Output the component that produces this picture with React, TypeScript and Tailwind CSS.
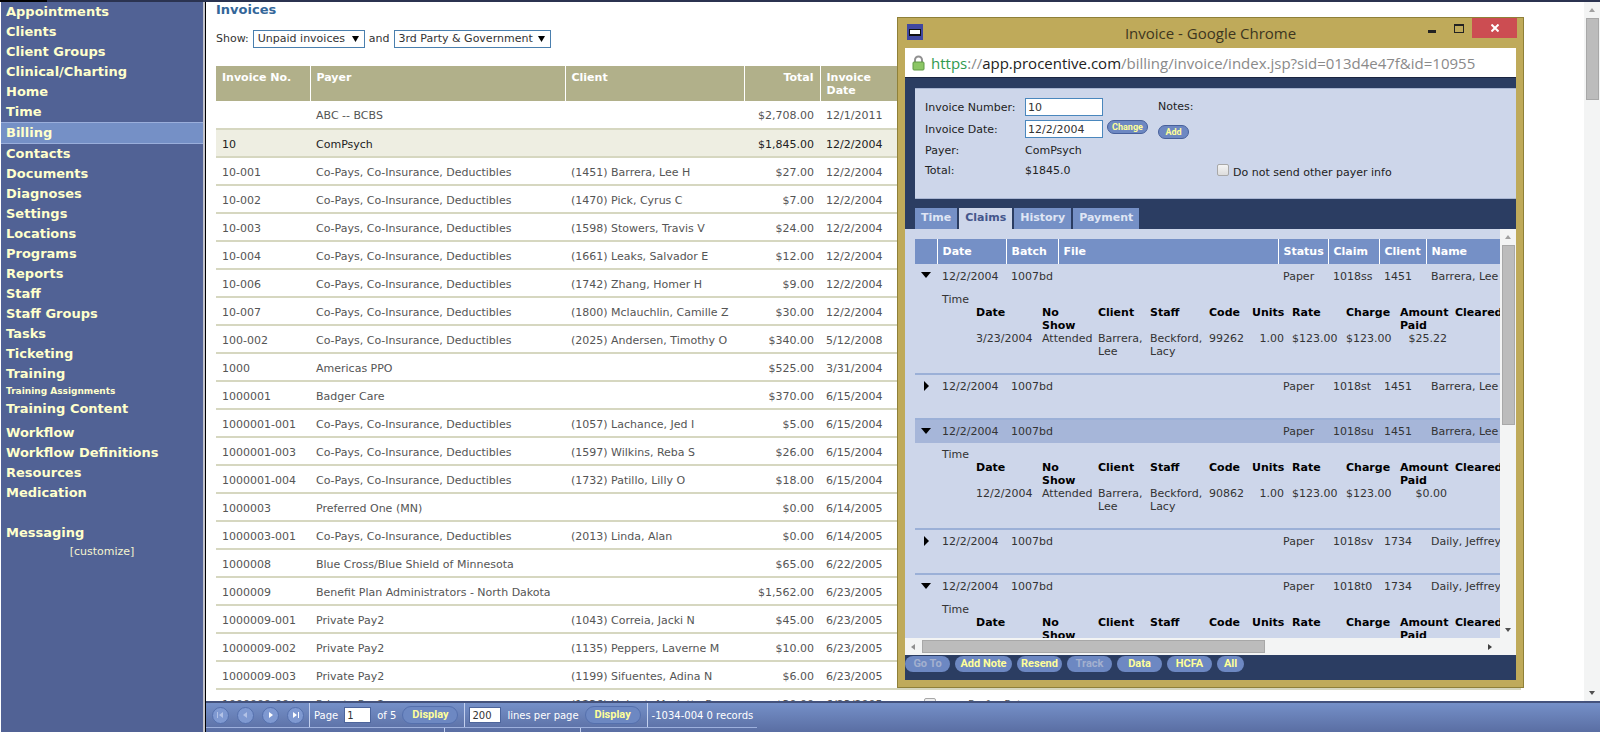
import { useState } from "react";
import type { ReactNode } from "react";

type Invoice = {
  no: string;
  payer: string;
  client?: string;
  total: string;
  date: string;
};

type Claim = {
  date: string;
  batch: string;
  status: string;
  claim: string;
  client: string;
  name: string;
  time?: { date: string; code: string; paid: string };
};

const COPAY = "Co-Pays, Co-Insurance, Deductibles";

const INVOICES: Invoice[] = [
  { no: "", payer: "ABC -- BCBS", total: "$2,708.00", date: "12/1/2011" },
  { no: "10", payer: "ComPsych", total: "$1,845.00", date: "12/2/2004" },
  { no: "10-001", payer: COPAY, client: "(1451) Barrera, Lee H", total: "$27.00", date: "12/2/2004" },
  { no: "10-002", payer: COPAY, client: "(1470) Pick, Cyrus C", total: "$7.00", date: "12/2/2004" },
  { no: "10-003", payer: COPAY, client: "(1598) Stowers, Travis V", total: "$24.00", date: "12/2/2004" },
  { no: "10-004", payer: COPAY, client: "(1661) Leaks, Salvador E", total: "$12.00", date: "12/2/2004" },
  { no: "10-006", payer: COPAY, client: "(1742) Zhang, Homer H", total: "$9.00", date: "12/2/2004" },
  { no: "10-007", payer: COPAY, client: "(1800) Mclauchlin, Camille Z", total: "$30.00", date: "12/2/2004" },
  { no: "100-002", payer: COPAY, client: "(2025) Andersen, Timothy O", total: "$340.00", date: "5/12/2008" },
  { no: "1000", payer: "Americas PPO", total: "$525.00", date: "3/31/2004" },
  { no: "1000001", payer: "Badger Care", total: "$370.00", date: "6/15/2004" },
  { no: "1000001-001", payer: COPAY, client: "(1057) Lachance, Jed I", total: "$5.00", date: "6/15/2004" },
  { no: "1000001-003", payer: COPAY, client: "(1597) Wilkins, Reba S", total: "$26.00", date: "6/15/2004" },
  { no: "1000001-004", payer: COPAY, client: "(1732) Patillo, Lilly O", total: "$18.00", date: "6/15/2004" },
  { no: "1000003", payer: "Preferred One (MN)", total: "$0.00", date: "6/14/2005" },
  { no: "1000003-001", payer: COPAY, client: "(2013) Linda, Alan", total: "$0.00", date: "6/14/2005" },
  { no: "1000008", payer: "Blue Cross/Blue Shield of Minnesota", total: "$65.00", date: "6/22/2005" },
  { no: "1000009", payer: "Benefit Plan Administrators - North Dakota", total: "$1,562.00", date: "6/23/2005" },
  { no: "1000009-001", payer: "Private Pay2", client: "(1043) Correia, Jacki N", total: "$45.00", date: "6/23/2005" },
  { no: "1000009-002", payer: "Private Pay2", client: "(1135) Peppers, Laverne M", total: "$10.00", date: "6/23/2005" },
  { no: "1000009-003", payer: "Private Pay2", client: "(1199) Sifuentes, Adina N", total: "$6.00", date: "6/23/2005" },
  { no: "1000009-004", payer: "Private Pay2", client: "(1236) Hubert, Marietta R", total: "$30.00", date: "6/23/2005" },
];

const CLAIMS: Claim[] = [
  { date: "12/2/2004", batch: "1007bd", status: "Paper", claim: "1018ss", client: "1451", name: "Barrera, Lee", time: { date: "3/23/2004", code: "99262", paid: "$25.22" } },
  { date: "12/2/2004", batch: "1007bd", status: "Paper", claim: "1018st", client: "1451", name: "Barrera, Lee" },
  { date: "12/2/2004", batch: "1007bd", status: "Paper", claim: "1018su", client: "1451", name: "Barrera, Lee", time: { date: "12/2/2004", code: "90862", paid: "$0.00" } },
  { date: "12/2/2004", batch: "1007bd", status: "Paper", claim: "1018sv", client: "1734", name: "Daily, Jeffrey" },
  { date: "12/2/2004", batch: "1007bd", status: "Paper", claim: "1018t0", client: "1734", name: "Daily, Jeffrey", time: { date: "12/2/2004", code: "90862", paid: "$0.00" } },
];

const MENU = [
  "Appointments", "Clients", "Client Groups", "Clinical/Charting", "Home", "Time", "Billing",
  "Contacts", "Documents", "Diagnoses", "Settings", "Locations", "Programs", "Reports",
  "Staff", "Staff Groups", "Tasks", "Ticketing", "Training", "Training Assignments",
  "Training Content", "Workflow", "Workflow Definitions", "Resources", "Medication", "Messaging",
];

function menuClass(item: string) {
  switch (item) {
    case "Billing":
      return "border-y border-[#9aaedb] bg-[#7590c6] text-[13px] leading-5";
    case "Training Assignments":
      return "text-[9px] leading-[15px]";
    case "Workflow":
      return "mt-1 text-[13px] leading-5";
    case "Messaging":
      return "mt-5 text-[13px] leading-5";
    default:
      return "text-[13px] leading-5";
  }
}

function Sidebar() {
  return (
    <nav className="ml-px w-[205px] shrink-0 border-r border-black bg-[#516295]">
      <div className="h-full border-r-2 border-[#c4c4cc]">
        {MENU.map((item) => (
          <a key={item} href="#" className={`block pl-[5px] font-bold text-[#ffffcc] ${menuClass(item)}`}>
            {item}
          </a>
        ))}
        <a href="#" className="block text-center text-[11px] leading-[18px] text-[#f5f5d0]">
          [customize]
        </a>
      </div>
    </nav>
  );
}

function Filter({ label, value, width }: { label: string; value: string; width: string }) {
  return (
    <span className={`relative inline-flex ${width}`}>
      <select
        aria-label={label}
        className="h-[18px] w-full appearance-none border border-[#4a7fae] bg-white pl-1 text-[11px] leading-4 text-[#333]"
      >
        <option>{value}</option>
      </select>
      <svg className="pointer-events-none absolute top-1.5 right-1.5" width="7" height="6" viewBox="0 0 7 6">
        <path d="M0 0h7L3.5 6z" fill="#000" />
      </svg>
    </span>
  );
}

function InvoiceTable() {
  const [selected, setSelected] = useState("10");
  const th = "border-r border-white px-1.5 pt-[5px] align-top font-bold";
  const td = "pt-0.5 pl-1.5 whitespace-nowrap";
  return (
    <table className="mt-[18px] w-[1305px] table-fixed border-collapse text-[11px] leading-[13px]">
      <colgroup>
        <col className="w-[94px]" />
        <col className="w-[255px]" />
        <col className="w-[179px]" />
        <col className="w-[76px]" />
        <col className="w-[98px]" />
        <col className="w-[44px]" />
        <col />
      </colgroup>
      <thead>
        <tr className="h-[35px] bg-[#b1b08a] text-left text-white">
          <th className={th}>Invoice No.</th>
          <th className={th}>Payer</th>
          <th className={th}>Client</th>
          <th className={`${th} text-right`}>Total</th>
          <th className={th}>
            Invoice
            <br />
            Date
          </th>
          <th className="w-[44px]"></th>
          <th></th>
        </tr>
      </thead>
      <tbody>
        {INVOICES.map((inv) => (
          <tr
            key={inv.no}
            onClick={() => setSelected(inv.no)}
            className={`h-7 border-b-2 border-[#d6d7c0] ${inv.no === selected ? "bg-[#eeeee2] text-[#222]" : "text-[#555]"}`}
          >
            <td className={td}>{inv.no}</td>
            <td className={td}>{inv.payer}</td>
            <td className={td}>{inv.client}</td>
            <td className="pt-0.5 pr-1.5 text-right">{inv.total}</td>
            <td className={td}>{inv.date}</td>
            <td className={td}>
              <input
                type="checkbox"
                aria-label={`Select ${inv.no}`}
                className="block size-3 appearance-none rounded-xs border border-[#a8a8a8] bg-[#eee]"
              />
            </td>
            <td className={td}>Prefer Paty</td>
          </tr>
        ))}
      </tbody>
    </table>
  );
}

function Arrow({ dir, color }: { dir: "up" | "down" | "left" | "right"; color: string }) {
  const d = {
    up: "M1 6L4 2l3 4z",
    down: "M1 2h6L4 6z",
    left: "M6 1v6L2 4z",
    right: "M2 1v6l4-3z",
  }[dir];
  return (
    <svg width="8" height="8" viewBox="0 0 8 8" className="shrink-0">
      <path d={d} fill={color} />
    </svg>
  );
}

function VerticalScrollbar({ thumb }: { thumb: string }) {
  return (
    <div className="flex w-4 shrink-0 flex-col items-center bg-[#f3f4f4] pt-1 pb-1">
      <Arrow dir="up" color="#a0a0a0" />
      <div className={`mt-1 w-[13px] border border-[#a8a8a8] bg-[#bcbcbc] ${thumb}`} />
      <div className="flex-1" />
      <Arrow dir="down" color="#505050" />
    </div>
  );
}

function Pill({ children, size, disabled }: { children: ReactNode; size: string; disabled?: boolean }) {
  return (
    <button
      type="button"
      disabled={disabled}
      className={`flex shrink-0 items-center justify-center rounded-full bg-[#6d88c2] font-[Roboto,sans-serif] font-bold text-[#ffff99] disabled:text-[#a3b0cf] ${size}`}
    >
      {children}
    </button>
  );
}

function PagerButton({ label, path, disabled }: { label: string; path: string; disabled?: boolean }) {
  return (
    <button
      type="button"
      aria-label={label}
      disabled={disabled}
      className="flex size-[17px] items-center justify-center rounded-full border border-[#5570ad] bg-[#7f99d1] text-white disabled:text-[#b3c2e6]"
    >
      <svg width="9" height="8" viewBox="0 0 9 8">
        <path d={path} fill="currentColor" />
      </svg>
    </button>
  );
}

function Pager() {
  const divider = "h-full w-px bg-[#c3d0ee]";
  const box = "h-4 border border-[#4d659c] bg-white px-0.5 text-[10px] text-[#333]";
  return (
    <footer className="h-[31px] border-t-2 border-[#44527c] bg-linear-to-b from-[#7590c8] to-[#5a6ea3] text-[10px] text-white">
      <div className="flex h-[25px] w-[551px] items-center border-b border-[#9db0dd]">
        <div className="flex w-[103px] justify-center gap-2">
          <PagerButton label="First page" path="M1 1h1v6H1zM7 1v6L3 4z" disabled />
          <PagerButton label="Previous page" path="M6 1v6L2 4z" disabled />
          <PagerButton label="Next page" path="M3 1v6l4-3z" />
          <PagerButton label="Last page" path="M2 1v6l4-3zM7 1h1v6H7z" />
        </div>
        <div className={divider} />
        <label className="flex items-center gap-1.5 pl-1">
          Page
          <input defaultValue="1" className={`w-[27px] ${box}`} />
        </label>
        <span className="px-1.5 whitespace-nowrap">of 5</span>
        <Pill size="h-[18px] w-14 border border-[#5570ad] text-[11px]">Display</Pill>
        <div className={`ml-1.5 ${divider}`} />
        <label className="flex items-center gap-1.5 pl-1 whitespace-nowrap">
          <input defaultValue="200" className={`w-8 ${box}`} />
          lines per page
        </label>
        <div className="w-1.5" />
        <Pill size="h-[18px] w-14 border border-[#5570ad] text-[11px]">Display</Pill>
        <div className={`ml-1.5 ${divider}`} />
        <span className="pl-1 whitespace-nowrap">-1034-004 0 records</span>
      </div>
      <div className="flex h-1">
        <div className="w-[239px] border-r border-[#c3d0ee]" />
        <div className="w-[136px] border-r border-[#c3d0ee]" />
      </div>
    </footer>
  );
}

function InvoiceForm() {
  const box = "h-[18px] w-[78px] border border-[#4a87bd] bg-white px-0.5 text-[11px] text-[#333]";
  return (
    <div className="ml-2.5 flex h-[111px] border-y border-[#a9b6d3] bg-[#cdd6ea] pt-[7px] pl-2.5 text-[11px] leading-[13px] text-[#222]">
      <div className="w-[233px]">
        <div className="flex h-[22px] items-center">
          <label htmlFor="invoice-number" className="w-[100px]">Invoice Number:</label>
          <input id="invoice-number" defaultValue="10" className={box} />
        </div>
        <div className="flex h-[22px] items-center">
          <label htmlFor="invoice-date" className="w-[100px]">Invoice Date:</label>
          <input id="invoice-date" defaultValue="12/2/2004" className={box} />
          <div className="mb-1 ml-1">
            <Pill size="h-3.5 w-[41px] border border-[#47609b] text-[9px]">Change</Pill>
          </div>
        </div>
        <div className="flex h-5 items-center">
          <span className="w-[100px]">Payer:</span>
          <span>ComPsych</span>
        </div>
        <div className="flex h-[21px] items-center">
          <span className="w-[100px]">Total:</span>
          <span>$1845.0</span>
        </div>
      </div>
      <div className="flex w-[59px] flex-col gap-3 pt-1">
        <span>Notes:</span>
        <Pill size="h-3.5 w-[31px] border border-[#47609b] text-[9px]">Add</Pill>
      </div>
      <label className="flex h-[86px] items-end gap-1 whitespace-nowrap">
        <input
          type="checkbox"
          className="mb-1.5 size-3 appearance-none rounded-xs border border-[#a8a8a8] bg-linear-to-b from-[#f4f4f4] to-[#ddd]"
        />
        <span className="pb-[3px]">Do not send other payer info</span>
      </label>
    </div>
  );
}

function ClaimTime({ time }: { time: NonNullable<Claim["time"]> }) {
  return (
    <table className="ml-[39px] w-[540px] table-fixed">
      <colgroup>
        <col className="w-[66px]" />
        <col className="w-[56px]" />
        <col className="w-[52px]" />
        <col className="w-[59px]" />
        <col className="w-[43px]" />
        <col className="w-[40px]" />
        <col className="w-[54px]" />
        <col className="w-[54px]" />
        <col className="w-[55px]" />
        <col />
      </colgroup>
      <thead>
        <tr className="text-left align-top text-black">
          <th>Date</th>
          <th>
            No
            <br />
            Show
          </th>
          <th>Client</th>
          <th>Staff</th>
          <th>Code</th>
          <th>Units</th>
          <th>Rate</th>
          <th>Charge</th>
          <th>
            Amount
            <br />
            Paid
          </th>
          <th>Cleared</th>
        </tr>
      </thead>
      <tbody>
        <tr className="align-top">
          <td>{time.date}</td>
          <td>Attended</td>
          <td>Barrera, Lee</td>
          <td>Beckford, Lacy</td>
          <td>{time.code}</td>
          <td className="pr-2 text-right">1.00</td>
          <td>$123.00</td>
          <td>$123.00</td>
          <td className="pr-2 text-right">{time.paid}</td>
          <td></td>
        </tr>
      </tbody>
    </table>
  );
}

function ClaimRows({ claim, active }: { claim: Claim; active: boolean }) {
  const [open, setOpen] = useState(!!claim.time);
  const td = "pl-[5px]";
  return (
    <>
      <tr className={`h-6 ${active ? "bg-[#a6b6d9]" : ""}`}>
        <td>
          <button type="button" aria-label="Toggle claim" onClick={() => setOpen(!open)} className="block pb-0.5 pl-1.5">
            <svg width="10" height="10" viewBox="0 0 10 10">
              <path d={open ? "M0 2h10L5 8z" : "M3 0l5 5-5 5z"} fill="#000" />
            </svg>
          </button>
        </td>
        <td className={td}>{claim.date}</td>
        <td className={td}>{claim.batch}</td>
        <td></td>
        <td className={td}>{claim.status}</td>
        <td className={td}>{claim.claim}</td>
        <td className={td}>{claim.client}</td>
        <td className={`${td} whitespace-nowrap`}>{claim.name}</td>
      </tr>
      <tr className="border-b-2 border-[#9bb0d7] align-top">
        <td></td>
        <td colSpan={7} className={open && claim.time ? "h-[86px]" : "h-[21px]"}>
          {open && claim.time && (
            <>
              <div className="pt-[5px] pl-[5px] leading-[13px]">Time</div>
              <ClaimTime time={claim.time} />
            </>
          )}
        </td>
      </tr>
    </>
  );
}

function ClaimsTable() {
  const th = "border-r border-white pl-[5px]";
  return (
    <table className="mt-2.5 ml-2.5 w-[640px] table-fixed border-collapse text-[11px] leading-[13px] text-[#333]">
      <colgroup>
        <col className="w-[22px]" />
        <col className="w-[69px]" />
        <col className="w-[52px]" />
        <col className="w-[220px]" />
        <col className="w-[50px]" />
        <col className="w-[51px]" />
        <col className="w-[47px]" />
        <col />
      </colgroup>
      <thead>
        <tr className="h-[25px] bg-[#7590c6] text-left text-white">
          <th className={th}></th>
          <th className={th}>Date</th>
          <th className={th}>Batch</th>
          <th className={th}>File</th>
          <th className={th}>Status</th>
          <th className={th}>Claim</th>
          <th className={th}>Client</th>
          <th className={th}>Name</th>
        </tr>
      </thead>
      <tbody>
        {CLAIMS.map((claim) => (
          <ClaimRows key={claim.claim} claim={claim} active={claim.claim === "1018su"} />
        ))}
      </tbody>
    </table>
  );
}

function TitleBar() {
  return (
    <div className="flex h-[30px] items-start pr-1.5 pl-[9px]">
      <svg width="16" height="16" viewBox="0 0 16 16" className="mt-1.5">
        <rect width="16" height="16" fill="#4048a0" />
        <rect x="2" y="5" width="12" height="7" fill="#111" />
        <rect x="3" y="6" width="10" height="4" fill="#fff" />
      </svg>
      <div className="flex-1 pt-1 pl-20 text-center font-['Open_Sans',sans-serif] text-[15px] leading-[22px] text-[#3d3620]">
        Invoice - Google Chrome
      </div>
      <button type="button" aria-label="Minimize" className="flex h-5 w-[27px] items-center justify-center">
        <svg width="10" height="10" viewBox="0 0 10 10">
          <path d="M1 7h8v3H1z" fill="#222" />
        </svg>
      </button>
      <button type="button" aria-label="Maximize" className="flex h-5 w-[27px] items-center justify-center">
        <svg width="10" height="9" viewBox="0 0 10 9">
          <path d="M0 0h10v9H0zM1 2v6h8V2z" fill="#222" fillRule="evenodd" />
        </svg>
      </button>
      <button type="button" aria-label="Close" className="flex h-5 w-[45px] items-center justify-center bg-[#cc4d52]">
        <svg width="8" height="8" viewBox="0 0 8 8">
          <path d="M0.5 0.5l7 7M7.5 0.5l-7 7" stroke="#fff" strokeWidth="2" />
        </svg>
      </button>
    </div>
  );
}

function AddressBar() {
  return (
    <div className="flex h-[30px] items-center gap-1.5 border-b border-[#1a2440] bg-white pl-[7px]">
      <svg width="13" height="16" viewBox="0 0 13 16">
        <path d="M3 8V5a3.5 3.5 0 0 1 7 0v3" fill="none" stroke="#909090" strokeWidth="2" />
        <rect x="1" y="7" width="11" height="8" rx="1" fill="#8cc665" stroke="#5f9a45" />
      </svg>
      <div className="font-['Open_Sans',sans-serif] text-[15px] leading-6 whitespace-nowrap text-[#8a8a8a]">
        <span className="text-[#2f9a4f]">https</span>://<span className="text-[#222]">app.procentive.com</span>
        /billing/invoice/index.jsp?sid=013d4e47f&amp;id=10955
      </div>
    </div>
  );
}

function InvoiceWindow() {
  const [tab, setTab] = useState("Claims");
  return (
    <section className="absolute top-[17px] right-[76px] flex h-[671px] w-[627px] flex-col border border-[#8f8038] bg-[#bfaa5a]">
      <TitleBar />
      <div className="mx-[7px] mb-[7px] flex min-h-0 flex-1 flex-col bg-[#2b3d62]">
        <AddressBar />
        <div className="h-2.5" />
        <InvoiceForm />
        <div role="tablist" className="mt-[9px] ml-2.5 flex gap-0.5">
          {["Time", "Claims", "History", "Payment"].map((name) => (
            <button
              key={name}
              type="button"
              role="tab"
              aria-selected={tab === name}
              onClick={() => setTab(name)}
              className={`h-[21px] px-1.5 text-[11px] font-bold ${tab === name ? "bg-[#cdd6ea] text-[#44558c]" : "bg-[#7590c6] text-[#dfe5f4]"}`}
            >
              {name}
            </button>
          ))}
        </div>
        <div className="flex min-h-0 flex-1">
          <div className="min-w-0 flex-1 overflow-hidden bg-[#cdd6ea]">
            <ClaimsTable />
          </div>
          <VerticalScrollbar thumb="h-[180px]" />
        </div>
        <div className="flex h-[17px] items-center bg-[#f3f4f4] pl-1">
          <Arrow dir="left" color="#909090" />
          <div className="ml-[5px] h-[13px] w-[343px] border border-[#a8a8a8] bg-[#bcbcbc]" />
          <div className="flex-1" />
          <div className="pr-[22px]">
            <Arrow dir="right" color="#404040" />
          </div>
        </div>
        <div className="flex h-[25px] gap-[5px] pt-px">
          <Pill size="h-4 w-[45px] text-[11px]" disabled>Go To</Pill>
          <Pill size="h-4 w-[57px] text-[11px]">Add Note</Pill>
          <Pill size="h-4 w-[45px] text-[11px]">Resend</Pill>
          <Pill size="h-4 w-[45px] text-[11px]" disabled>Track</Pill>
          <Pill size="h-4 w-[45px] text-[11px]">Data</Pill>
          <Pill size="h-4 w-[45px] text-[11px]">HCFA</Pill>
          <Pill size="h-4 w-[27px] text-[11px]">All</Pill>
        </div>
      </div>
    </section>
  );
}

export default function App() {
  return (
    <div className="relative flex h-screen flex-col overflow-hidden bg-white font-['DejaVu_Sans',Verdana,sans-serif]">
      <div className="h-0.5 shrink-0 border-l-[47px] border-black bg-[#2b3350]" />
      <div className="flex min-h-0 flex-1">
        <Sidebar />
        <div className="flex min-w-0 flex-1 flex-col">
          <div className="flex min-h-0 flex-1">
            <main className="min-w-0 flex-1 overflow-hidden pl-2.5">
              <h1 className="text-[13px] leading-4 font-bold text-[#336699]">Invoices</h1>
              <div className="mt-3 flex items-center gap-1 text-[11px] leading-4 text-[#333]">
                <span>Show:</span>
                <Filter label="Invoice status" value="Unpaid invoices" width="w-28" />
                <span>and</span>
                <Filter label="Payer type" value="3rd Party &amp; Government" width="w-[157px]" />
              </div>
              <InvoiceTable />
            </main>
            <VerticalScrollbar thumb="h-[82px]" />
          </div>
          <Pager />
        </div>
      </div>
      <InvoiceWindow />
    </div>
  );
}
